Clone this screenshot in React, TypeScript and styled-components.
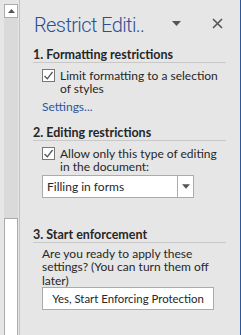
import styled, { createGlobalStyle } from 'styled-components';

const Global = createGlobalStyle`
  html, body {
    margin: 0;
    padding: 0;
    background: #e6e6e6;
  }
  body {
    font-family: Lato, 'Open Sans', sans-serif;
    color: #262626;
  }
`;

const Frame = styled.div`
  display: flex;
  width: 241px;
  height: 335px;
  overflow: hidden;
  background: #e6e6e6;
  border-right: 1px solid #2b579a;
  box-sizing: border-box;
`;

const Scrollbar = styled.div`
  display: flex;
  flex-direction: column;
  width: 20px;
  padding: 4px 1px 0 4px;
  box-sizing: border-box;
  border-right: 1px solid #c3c3c3;
  flex-shrink: 0;
`;

const Track = styled.div`
  display: flex;
  flex-direction: column;
  flex: 1;
  background: #dadada;
`;

const UpButton = styled.div`
  display: flex;
  align-items: center;
  justify-content: center;
  height: 14px;
  background: #fff;
  border: 1px solid #ababab;
  box-sizing: border-box;
`;

const Thumb = styled.div`
  margin-top: auto;
  height: 117px;
  background: #fff;
  border: 1px solid #ababab;
  border-bottom: none;
  box-sizing: border-box;
`;

const Panel = styled.div`
  flex: 1;
  padding: 0 14px 0 13px;
`;

const Header = styled.div`
  display: flex;
  align-items: center;
  height: 47px;
  padding-right: 3px;
`;

const Title = styled.div`
  flex: 1;
  font-family: Roboto, 'Open Sans', sans-serif;
  font-weight: 300;
  font-size: 20px;
  letter-spacing: -0.6px;
  color: #2b4f95;
  padding: 3px 0 0 1px;
  white-space: nowrap;
`;

const IconButton = styled.div<{ $gap?: number }>`
  display: flex;
  align-items: center;
  justify-content: center;
  width: 12px;
  margin-left: ${({ $gap }) => $gap ?? 0}px;
`;

const Section = styled.div<{ $space?: number }>`
  padding-bottom: ${({ $space }) => $space ?? 10}px;
`;

const SectionTitle = styled.div`
  font-size: 12.5px;
  font-weight: 700;
  line-height: 15px;
  border-bottom: 1px solid #c8c8c8;
`;

const Body = styled.div<{ $top?: number }>`
  padding: ${({ $top }) => $top ?? 6}px 0 0 9px;
  font-size: 12px;
  line-height: 13px;
`;

const CheckRow = styled.label`
  display: flex;
  gap: 5px;
  align-items: flex-start;
`;

const Box = styled.span`
  display: flex;
  align-items: center;
  justify-content: center;
  width: 13px;
  height: 13px;
  flex-shrink: 0;
  background: #fff;
  border: 1px solid #777;
  box-sizing: border-box;
`;

const Link = styled.a`
  display: block;
  margin-top: 5px;
  color: #2b579a;
  text-decoration: none;
`;

const Select = styled.div`
  display: flex;
  width: 152px;
  height: 23px;
  margin-top: 2px;
  background: #fff;
  border: 1px solid #ababab;
  box-sizing: border-box;
`;

const SelectValue = styled.div`
  flex: 1;
  padding-left: 4px;
  line-height: 21px;
`;

const SelectArrow = styled.div`
  display: flex;
  align-items: center;
  justify-content: center;
  width: 15px;
  border-left: 1px solid #ababab;
`;

const Note = styled.div`
  line-height: 13.4px;
`;

const Button = styled.div`
  width: 172px;
  height: 23px;
  margin-top: 0;
  font-size: 11.4px;
  line-height: 21px;
  text-align: center;
  background: #fff;
  border: 1px solid #ababab;
  box-sizing: border-box;
`;

const Caret = ({ w = 9 }: { w?: number }) => (
  <svg width={w} height={5} viewBox="0 0 9 5">
    <path d="M0 0h9L4.5 5z" fill="#555" />
  </svg>
);

const Check = () => (
  <svg width="11" height="11" viewBox="0 0 11 11">
    <path d="M1.5 6l2.8 2.8L9.5 2" fill="none" stroke="#555" strokeWidth="1.3" />
  </svg>
);

export default function App() {
  return (
    <>
      <Global />
      <Frame>
        <Scrollbar>
          <Track>
            <UpButton>
              <svg width="7" height="4" viewBox="0 0 7 4">
                <path d="M0 4h7L3.5 0z" fill="#555" />
              </svg>
            </UpButton>
            <Thumb />
          </Track>
        </Scrollbar>
        <Panel>
          <Header>
            <Title>Restrict Editi..</Title>
            <IconButton>
              <Caret />
            </IconButton>
            <IconButton $gap={29}>
              <svg width="11" height="11" viewBox="0 0 11 11">
                <path d="M1 1l9 9M10 1l-9 9" stroke="#555" strokeWidth="1.6" />
              </svg>
            </IconButton>
          </Header>
          <Section $space={12}>
            <SectionTitle>1. Formatting restrictions</SectionTitle>
            <Body>
              <CheckRow>
                <Box>
                  <Check />
                </Box>
                <span>Limit formatting to a selection of styles</span>
              </CheckRow>
              <Link href="#">Settings...</Link>
            </Body>
          </Section>
          <Section $space={29}>
            <SectionTitle>2. Editing restrictions</SectionTitle>
            <Body $top={6}>
              <CheckRow>
                <Box>
                  <Check />
                </Box>
                <span>Allow only this type of editing in the document:</span>
              </CheckRow>
              <Select>
                <SelectValue>Filling in forms</SelectValue>
                <SelectArrow>
                  <Caret w={8} />
                </SelectArrow>
              </Select>
            </Body>
          </Section>
          <Section>
            <SectionTitle>3. Start enforcement</SectionTitle>
            <Body $top={4}>
              <Note>Are you ready to apply these settings? (You can turn them off later)</Note>
              <Button>Yes, Start Enforcing Protection</Button>
            </Body>
          </Section>
        </Panel>
      </Frame>
    </>
  );
}
